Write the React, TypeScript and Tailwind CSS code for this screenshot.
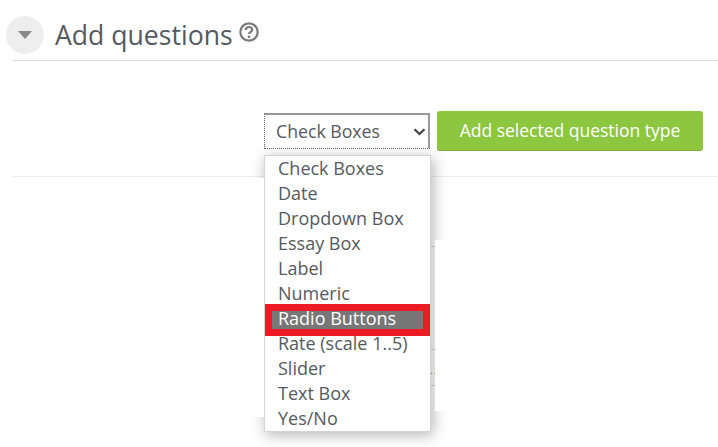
const items = ["Check Boxes","Date","Dropdown Box","Essay Box","Label","Numeric","Radio Buttons","Rate (scale 1..5)","Slider","Text Box","Yes/No"];

export default function App() {
  return (
    <div className="relative h-[447px] w-[718px] overflow-hidden bg-white font-['Open_Sans',sans-serif] text-[#555a60]">
      <div className="ml-[13px] flex h-[61px] items-start border-b border-[#dddddd]">
        <div className="-ml-[7px] mt-[16px] flex h-[38px] w-[38px] items-center justify-center rounded-full bg-[#eeeeee]">
          <div className="h-0 w-0 border-x-[7px] border-t-[8px] border-x-transparent border-t-[#888888]" />
        </div>
        <h2 className="ml-[11px] mt-[16px] text-[26.6px] leading-[38px] font-normal">Add questions</h2>
        <svg className="ml-[6px] mt-[22px]" width="20" height="20" viewBox="0 0 20 20" fill="none">
          <circle cx="10" cy="10" r="8.7" stroke="#7a7a7a" strokeWidth="2.2" />
          <path d="M6.800 8c0-2 1.400-3 3.200-3s3.200 1 3.200 2.700c0 2.400-3.200 2.100-3.200 4.300" stroke="#7a7a7a" strokeWidth="2.200" />
          <circle cx="10" cy="14.800" r="1.400" fill="#7a7a7a" />
        </svg>
      </div>
      <div className="ml-[12px] flex h-[116px] items-start justify-end border-b border-[#eeeeee] pr-[15px] pt-[50px]">
        <div className="mt-[2px] flex h-[36px] w-[166px] items-center justify-between border-t-2 border-r-2 border-b border-l border-t-[#999999] border-r-[#999999] border-b-[#666666] border-l-[#666666] [border-style:solid_solid_dotted_dotted] pl-[11px] pr-[2px] text-[17.7px]">
          <span>Check Boxes</span>
          <svg width="13" height="8" viewBox="0 0 13 8" fill="none"><path d="M1.500 1.200 6.500 6l5-4.800" stroke="#444444" strokeWidth="2.200" /></svg>
        </div>
        <button className="ml-[7px] h-[40px] w-[266px] rounded-[3px] border-b border-[#82b23a] bg-[#8dc63f] text-[17.5px] text-white">Add selected question type</button>
      </div>

      <div className="absolute left-0 top-[155px] flex w-full items-start">
        <div className="relative z-10 mt-[23px] h-[239px] w-[264px] bg-white" />
        <div className="h-[277px] w-[167px] border border-[#d4d4d4] bg-white shadow-[2px_3px_14px_rgba(0,0,0,0.3)]">
          {items.map((t) =>
            t === "Radio Buttons" ? (
              <div key={t} className="relative z-10 -mt-[2px] -mb-[5px] h-[32px] border-[7px] border-[#ed1c24] bg-[#777777] pl-[6px] text-[18px] leading-[15px] text-white">{t}</div>
            ) : (
              <div key={t} className="h-[25px] pl-[13px] text-[18px] leading-[25px]">{t}</div>
            )
          )}
        </div>
        <div className="flex w-[4px] flex-col pt-[91px]">
          <div className="h-px bg-[#bbbbbb]" />
          <div className="mt-[102px] h-px bg-[#bbbbbb]" />
          <div className="mt-[23px] flex h-px justify-between">
            <div className="w-px bg-[#5577aa]" />
            <div className="w-px bg-[#cc9955]" />
          </div>
          <div className="mt-[11px] h-px bg-[#bbbbbb]" />
        </div>
        <div className="relative z-10 mt-[85px] h-[171px] flex-1 bg-white" />
      </div>
    </div>
  );
}
